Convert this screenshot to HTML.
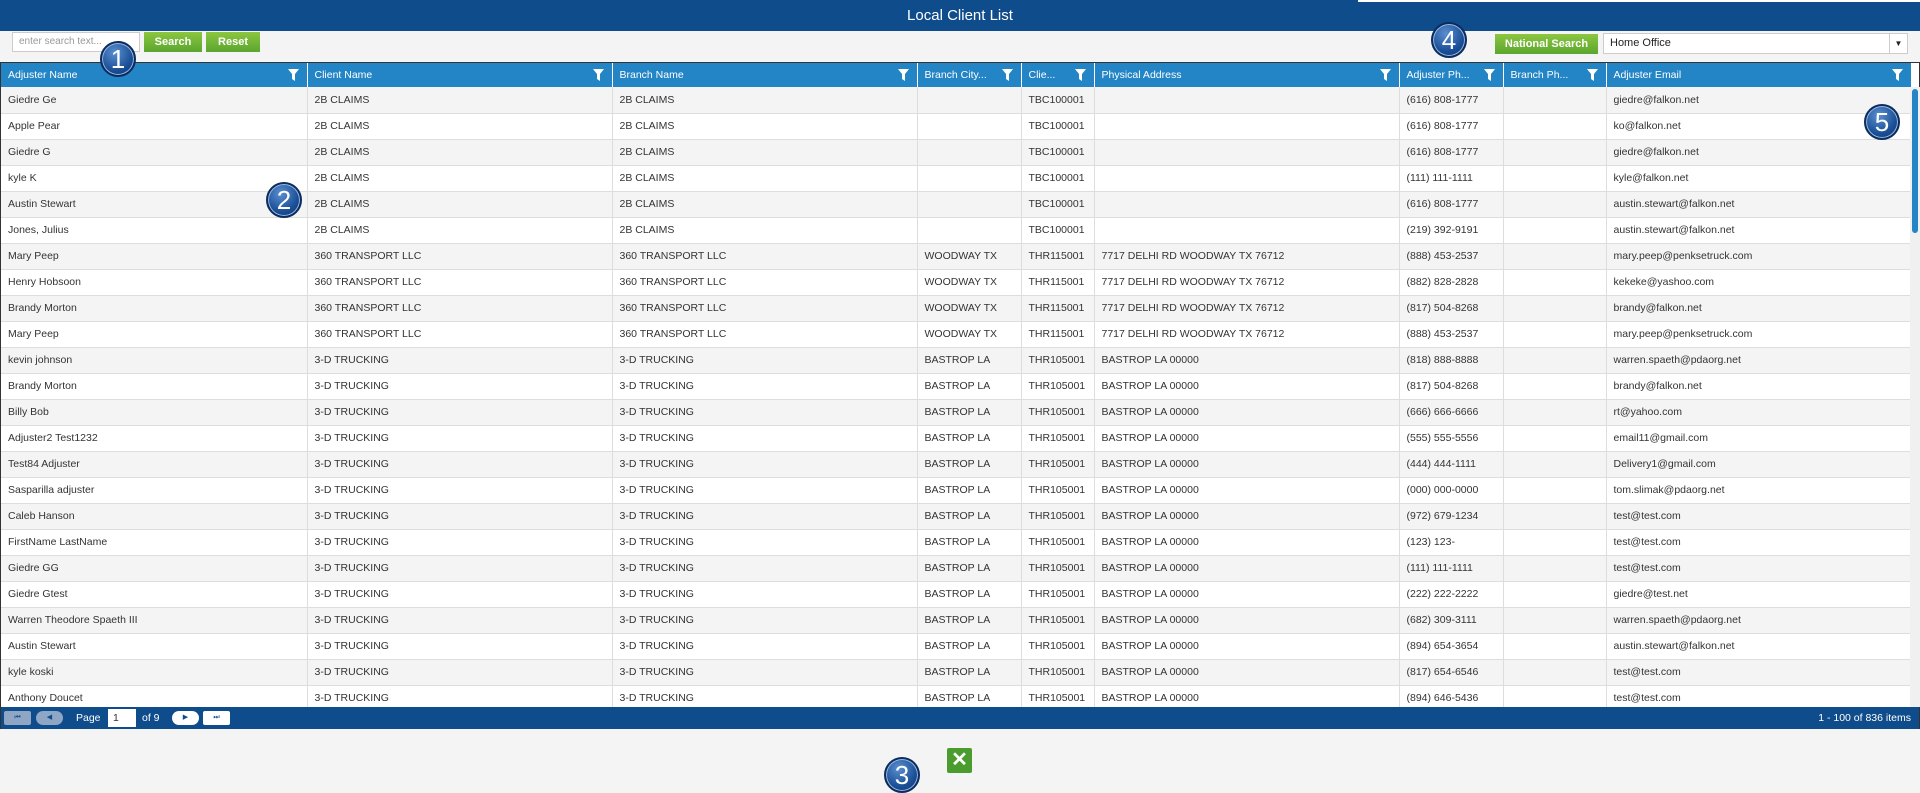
<!DOCTYPE html>
<html><head><meta charset="utf-8"><style>
*{box-sizing:border-box;margin:0;padding:0}
body{width:1920px;height:785px;background:#f4f4f4;font-family:"Liberation Sans",Arial,sans-serif;position:relative;overflow:hidden}
.top{position:absolute;left:0;top:0;width:1920px;height:31px;background:#0f4c8c;color:#fff;font-size:15px;text-align:center;line-height:31px}
.wl{position:absolute;left:1358px;top:0;width:562px;height:2px;background:#fff}
.inp{position:absolute;left:12px;top:32px;width:128px;height:20px;background:#fff;border:1px solid #ccc;font-size:10px;color:#999;padding:3px 6px}
.btn{position:absolute;height:20px;background:linear-gradient(#8cc63f,#5aa62f);color:#fff;font-size:11px;font-weight:bold;text-align:center;line-height:20px}
.sel{position:absolute;left:1603px;top:33px;width:305px;height:21px;background:#fff;border:1px solid #ccc;font-size:11px;padding:3px 6px;color:#222}
.sel b{position:absolute;right:0;top:0;width:18px;height:19px;border-left:1px solid #ccc;font-size:8px;text-align:center;line-height:19px}
.grid{position:absolute;left:0;top:62px;width:1920px;height:667px;border:1px solid #333;background:#fff}
table{border-collapse:collapse;table-layout:fixed;position:absolute;left:0}
th{background:#2384c6;color:#fff;font-size:10.5px;font-weight:normal;text-align:left;height:24px;padding:0 7px;border-right:1px solid #fff;position:relative;white-space:nowrap;overflow:hidden}
th svg{position:absolute;right:8px;top:6px}
td{font-size:10.5px;color:#333;height:26px;padding:0 7px;border-right:1px solid #ddd;border-bottom:1px solid #ddd;white-space:nowrap;overflow:hidden}
tr.a td{background:#f4f4f4}
.body{position:absolute;left:0;top:24px;width:1910px;height:620px;overflow:hidden}
.sb{position:absolute;left:1909px;top:24px;width:10px;height:620px;background:#f0f0f0}
.sb i{position:absolute;left:2px;top:2px;width:6px;height:144px;background:#2384c6;border-radius:3px}
.pager{position:absolute;left:0;top:644px;width:1918px;height:22px;background:#0f4c8c;color:#fff;font-size:10.5px}
.pb{position:absolute;top:4px;height:14px;border-radius:7px;background:#fff;color:#0f4c8c;font-size:7px;text-align:center;line-height:14px}
.c{position:absolute;width:36px;height:36px;border-radius:50%;background:radial-gradient(circle at 40% 30%,#5b8fd0,#1a4f96 60%,#0d3470);border:2px solid #0b2c5e;box-shadow:0 0 0 1px #9bb8e0 inset;color:#fff;font-size:26px;text-align:center;line-height:32px}
</style></head><body>
<div class="top">Local Client List</div><div class="wl"></div>
<div class="inp">enter search text...</div>
<div class="btn" style="left:144px;top:32px;width:58px">Search</div>
<div class="btn" style="left:206px;top:32px;width:54px">Reset</div>
<div class="btn" style="left:1495px;top:34px;width:103px;height:20px">National Search</div>
<div class="sel">Home Office<b>▼</b></div>
<div class="grid">
<table style="top:0;width:1910px"><colgroup><col style="width:306px"><col style="width:305px"><col style="width:305px"><col style="width:104px"><col style="width:73px"><col style="width:305px"><col style="width:104px"><col style="width:103px"><col style="width:305px"></colgroup>
<tr><th>Adjuster Name<svg width="11" height="12"><path d="M0 0H11L7 5V12L4 10V5Z" fill="#fff"/></svg></th><th>Client Name<svg width="11" height="12"><path d="M0 0H11L7 5V12L4 10V5Z" fill="#fff"/></svg></th><th>Branch Name<svg width="11" height="12"><path d="M0 0H11L7 5V12L4 10V5Z" fill="#fff"/></svg></th><th>Branch City...<svg width="11" height="12"><path d="M0 0H11L7 5V12L4 10V5Z" fill="#fff"/></svg></th><th>Clie...<svg width="11" height="12"><path d="M0 0H11L7 5V12L4 10V5Z" fill="#fff"/></svg></th><th>Physical Address<svg width="11" height="12"><path d="M0 0H11L7 5V12L4 10V5Z" fill="#fff"/></svg></th><th>Adjuster Ph...<svg width="11" height="12"><path d="M0 0H11L7 5V12L4 10V5Z" fill="#fff"/></svg></th><th>Branch Ph...<svg width="11" height="12"><path d="M0 0H11L7 5V12L4 10V5Z" fill="#fff"/></svg></th><th>Adjuster Email<svg width="11" height="12"><path d="M0 0H11L7 5V12L4 10V5Z" fill="#fff"/></svg></th></tr>
</table>
<div class="body"><table style="top:0;width:1910px"><colgroup><col style="width:306px"><col style="width:305px"><col style="width:305px"><col style="width:104px"><col style="width:73px"><col style="width:305px"><col style="width:104px"><col style="width:103px"><col style="width:305px"></colgroup>
<tr class="a"><td>Giedre Ge</td><td>2B CLAIMS</td><td>2B CLAIMS</td><td></td><td>TBC100001</td><td></td><td>(616) 808-1777</td><td></td><td>giedre@falkon.net</td></tr>
<tr><td>Apple Pear</td><td>2B CLAIMS</td><td>2B CLAIMS</td><td></td><td>TBC100001</td><td></td><td>(616) 808-1777</td><td></td><td>ko@falkon.net</td></tr>
<tr class="a"><td>Giedre G</td><td>2B CLAIMS</td><td>2B CLAIMS</td><td></td><td>TBC100001</td><td></td><td>(616) 808-1777</td><td></td><td>giedre@falkon.net</td></tr>
<tr><td>kyle K</td><td>2B CLAIMS</td><td>2B CLAIMS</td><td></td><td>TBC100001</td><td></td><td>(111) 111-1111</td><td></td><td>kyle@falkon.net</td></tr>
<tr class="a"><td>Austin Stewart</td><td>2B CLAIMS</td><td>2B CLAIMS</td><td></td><td>TBC100001</td><td></td><td>(616) 808-1777</td><td></td><td>austin.stewart@falkon.net</td></tr>
<tr><td>Jones, Julius</td><td>2B CLAIMS</td><td>2B CLAIMS</td><td></td><td>TBC100001</td><td></td><td>(219) 392-9191</td><td></td><td>austin.stewart@falkon.net</td></tr>
<tr class="a"><td>Mary Peep</td><td>360 TRANSPORT LLC</td><td>360 TRANSPORT LLC</td><td>WOODWAY TX</td><td>THR115001</td><td>7717 DELHI RD WOODWAY TX 76712</td><td>(888) 453-2537</td><td></td><td>mary.peep@penksetruck.com</td></tr>
<tr><td>Henry Hobsoon</td><td>360 TRANSPORT LLC</td><td>360 TRANSPORT LLC</td><td>WOODWAY TX</td><td>THR115001</td><td>7717 DELHI RD WOODWAY TX 76712</td><td>(882) 828-2828</td><td></td><td>kekeke@yashoo.com</td></tr>
<tr class="a"><td>Brandy Morton</td><td>360 TRANSPORT LLC</td><td>360 TRANSPORT LLC</td><td>WOODWAY TX</td><td>THR115001</td><td>7717 DELHI RD WOODWAY TX 76712</td><td>(817) 504-8268</td><td></td><td>brandy@falkon.net</td></tr>
<tr><td>Mary Peep</td><td>360 TRANSPORT LLC</td><td>360 TRANSPORT LLC</td><td>WOODWAY TX</td><td>THR115001</td><td>7717 DELHI RD WOODWAY TX 76712</td><td>(888) 453-2537</td><td></td><td>mary.peep@penksetruck.com</td></tr>
<tr class="a"><td>kevin johnson</td><td>3-D TRUCKING</td><td>3-D TRUCKING</td><td>BASTROP LA</td><td>THR105001</td><td>BASTROP LA 00000</td><td>(818) 888-8888</td><td></td><td>warren.spaeth@pdaorg.net</td></tr>
<tr><td>Brandy Morton</td><td>3-D TRUCKING</td><td>3-D TRUCKING</td><td>BASTROP LA</td><td>THR105001</td><td>BASTROP LA 00000</td><td>(817) 504-8268</td><td></td><td>brandy@falkon.net</td></tr>
<tr class="a"><td>Billy Bob</td><td>3-D TRUCKING</td><td>3-D TRUCKING</td><td>BASTROP LA</td><td>THR105001</td><td>BASTROP LA 00000</td><td>(666) 666-6666</td><td></td><td>rt@yahoo.com</td></tr>
<tr><td>Adjuster2 Test1232</td><td>3-D TRUCKING</td><td>3-D TRUCKING</td><td>BASTROP LA</td><td>THR105001</td><td>BASTROP LA 00000</td><td>(555) 555-5556</td><td></td><td>email11@gmail.com</td></tr>
<tr class="a"><td>Test84 Adjuster</td><td>3-D TRUCKING</td><td>3-D TRUCKING</td><td>BASTROP LA</td><td>THR105001</td><td>BASTROP LA 00000</td><td>(444) 444-1111</td><td></td><td>Delivery1@gmail.com</td></tr>
<tr><td>Sasparilla adjuster</td><td>3-D TRUCKING</td><td>3-D TRUCKING</td><td>BASTROP LA</td><td>THR105001</td><td>BASTROP LA 00000</td><td>(000) 000-0000</td><td></td><td>tom.slimak@pdaorg.net</td></tr>
<tr class="a"><td>Caleb Hanson</td><td>3-D TRUCKING</td><td>3-D TRUCKING</td><td>BASTROP LA</td><td>THR105001</td><td>BASTROP LA 00000</td><td>(972) 679-1234</td><td></td><td>test@test.com</td></tr>
<tr><td>FirstName LastName</td><td>3-D TRUCKING</td><td>3-D TRUCKING</td><td>BASTROP LA</td><td>THR105001</td><td>BASTROP LA 00000</td><td>(123) 123-</td><td></td><td>test@test.com</td></tr>
<tr class="a"><td>Giedre GG</td><td>3-D TRUCKING</td><td>3-D TRUCKING</td><td>BASTROP LA</td><td>THR105001</td><td>BASTROP LA 00000</td><td>(111) 111-1111</td><td></td><td>test@test.com</td></tr>
<tr><td>Giedre Gtest</td><td>3-D TRUCKING</td><td>3-D TRUCKING</td><td>BASTROP LA</td><td>THR105001</td><td>BASTROP LA 00000</td><td>(222) 222-2222</td><td></td><td>giedre@test.net</td></tr>
<tr class="a"><td>Warren Theodore Spaeth III</td><td>3-D TRUCKING</td><td>3-D TRUCKING</td><td>BASTROP LA</td><td>THR105001</td><td>BASTROP LA 00000</td><td>(682) 309-3111</td><td></td><td>warren.spaeth@pdaorg.net</td></tr>
<tr><td>Austin Stewart</td><td>3-D TRUCKING</td><td>3-D TRUCKING</td><td>BASTROP LA</td><td>THR105001</td><td>BASTROP LA 00000</td><td>(894) 654-3654</td><td></td><td>austin.stewart@falkon.net</td></tr>
<tr class="a"><td>kyle koski</td><td>3-D TRUCKING</td><td>3-D TRUCKING</td><td>BASTROP LA</td><td>THR105001</td><td>BASTROP LA 00000</td><td>(817) 654-6546</td><td></td><td>test@test.com</td></tr>
<tr><td>Anthony Doucet</td><td>3-D TRUCKING</td><td>3-D TRUCKING</td><td>BASTROP LA</td><td>THR105001</td><td>BASTROP LA 00000</td><td>(894) 646-5436</td><td></td><td>test@test.com</td></tr>
</table></div>
<div class="sb"><i></i></div>
<div class="pager">
<div class="pb" style="left:3px;width:27px;border-radius:2px;background:#8fa6c4">⏮</div>
<div class="pb" style="left:35px;width:27px;background:#8fa6c4">◀</div>
<div style="position:absolute;left:75px;top:5px">Page</div>
<div style="position:absolute;left:107px;top:2px;width:28px;height:18px;background:#fff;color:#333;padding:3px 5px">1</div>
<div style="position:absolute;left:141px;top:5px">of 9</div>
<div class="pb" style="left:171px;width:27px">▶</div>
<div class="pb" style="left:202px;width:27px;border-radius:2px">⏭</div>
<div style="position:absolute;right:8px;top:5px">1 - 100 of 836 items</div>
</div>
</div>
<div style="position:absolute;left:947px;top:748px;width:25px;height:25px;background:#4a9c2e;border-radius:2px;color:#fff;font-weight:bold;font-size:20px;text-align:center;line-height:25px">✕</div>
<div class="c" style="left:100px;top:41px">1</div>
<div class="c" style="left:266px;top:182px">2</div>
<div class="c" style="left:884px;top:757px">3</div>
<div class="c" style="left:1431px;top:22px">4</div>
<div class="c" style="left:1864px;top:104px">5</div>
</body></html>
